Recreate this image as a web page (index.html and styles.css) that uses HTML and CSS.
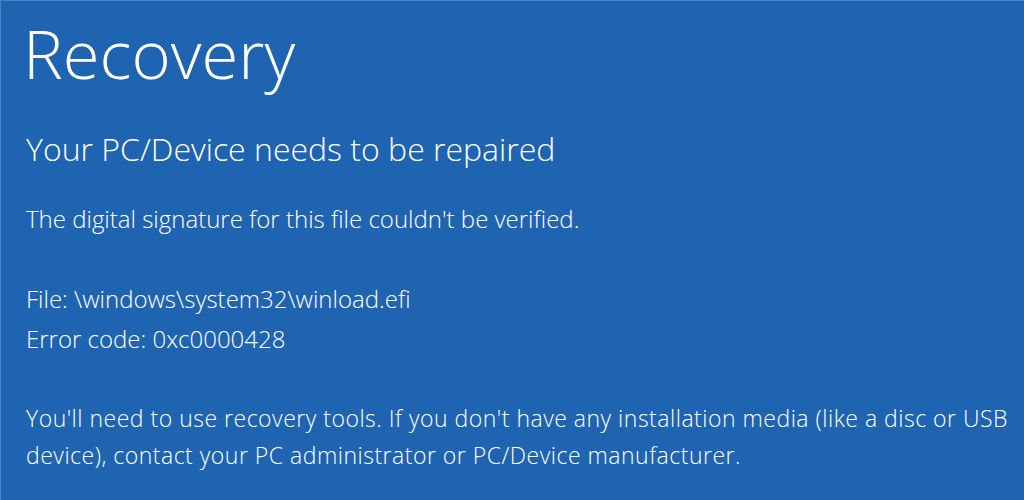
FILE: index.html
```html
<!DOCTYPE html>
<html lang="en">

<head>
    <meta charset="UTF-8">
    <title>Recovery</title>
    <link rel="stylesheet" href="styles.css">
</head>

<body>
    <main class="screen">
        <h1 class="title">Recovery</h1>
        <h2 class="subtitle">Your PC/Device needs to be repaired</h2>
        <p class="reason">The digital signature for this file couldn't be verified.</p>

        <div class="details">
            <p>File: \windows\system32\winload.efi</p>
            <p>Error code: 0xc0000428</p>
        </div>

        <p class="advice">You'll need to use recovery tools. If you don't have any installation media (like a disc or USB device), contact your PC administrator or PC/Device manufacturer.</p>
    </main>
</body>

</html>
```

FILE: styles.css
```css
* {
    margin: 0;
    padding: 0;
    box-sizing: border-box;
}

html,
body {
    height: 100%;
}

body {
    font-family: 'Open Sans', 'Noto Sans', sans-serif;
    background-color: #1f64b1;
    color: #fff;
    overflow: hidden;
}

.screen {
    height: 100%;
    border-top: 1px solid #4a84c4;
    border-left: 1px solid #4a84c4;
    padding: 12px 8px 0 25px;
}

.title {
    font-size: 67px;
    font-weight: 300;
    line-height: 80px;
    margin-left: -3px;
}

.subtitle {
    font-size: 32px;
    font-weight: 300;
    line-height: 40px;
    margin-top: 36px;
}

.reason {
    font-size: 24px;
    font-weight: 300;
    line-height: 30px;
    margin-top: 35px;
}

.details {
    margin-top: 45px;
    font-size: 24px;
    font-weight: 300;
    line-height: 40px;
}

/* wraps after "USB" like the original screen */
.advice {
    margin-top: 41px;
    font-size: 23px;
    font-weight: 300;
    line-height: 37px;
    letter-spacing: 0.5px;
}
```
